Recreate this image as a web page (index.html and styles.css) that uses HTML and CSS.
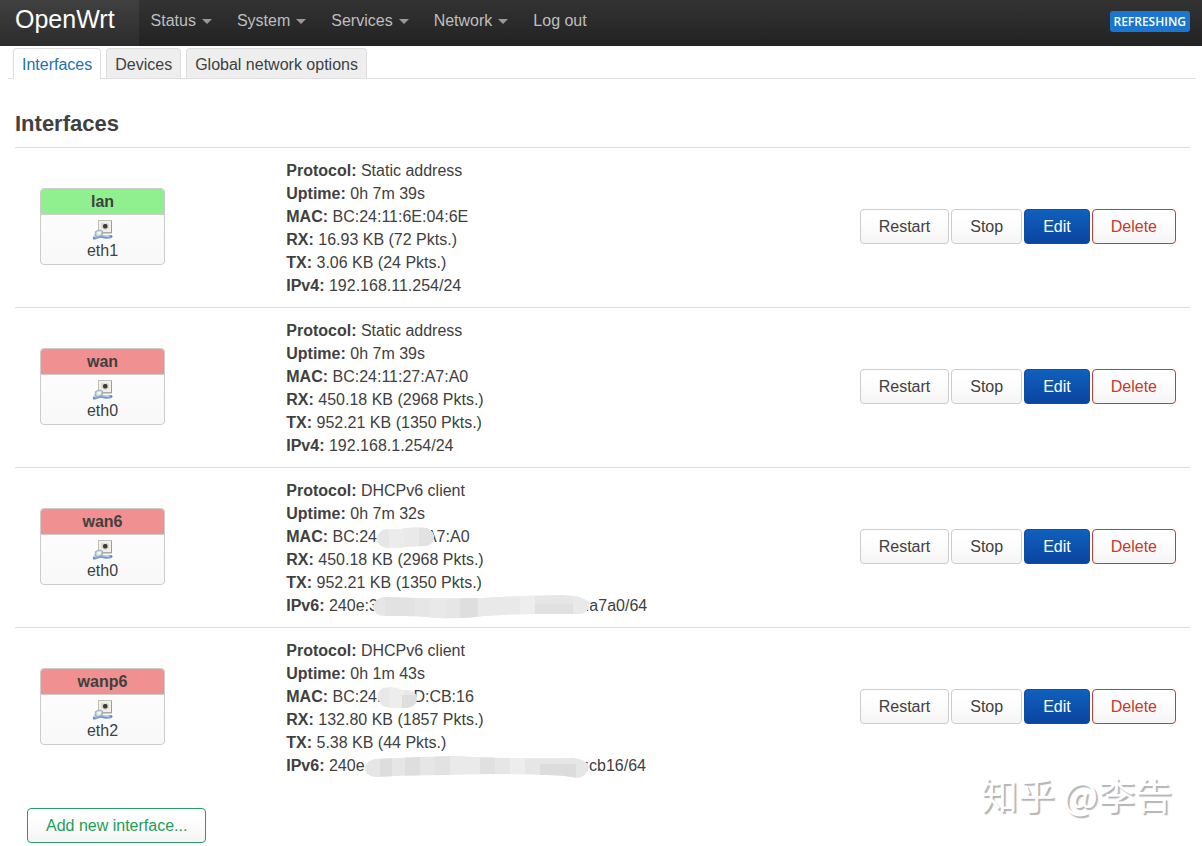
FILE: index.html
```html
<!DOCTYPE html>
<html lang="en">
<head>
<meta charset="utf-8">
<title>OpenWrt - Interfaces</title>
<link rel="stylesheet" href="styles.css">
</head>
<body>
<svg class="defs" aria-hidden="true">
  <defs>
    <symbol id="eth" viewBox="0 0 20 20">
      <rect x="5.500" y="0.500" width="13" height="12" fill="#f1f1ea" stroke="#c0c0b8"/>
      <path d="M18.500 1v12H9" fill="none" stroke="#9c9c96"/>
      <path d="M8 3h8v6h-2v1h-4V9H8z" fill="#dcdcd2"/>
      <rect x="10" y="4" width="4.500" height="4.500" rx="1.800" fill="#3a3a33"/>
      <path d="M1 18c2 .6 4-2 6.500-1.800 3 .2 4 2 10.500.3" fill="none" stroke="#6e93c8" stroke-width="3" stroke-linecap="round"/>
      <path d="M2 17.500c2 0 3.500-2 6-1.800 2.500.2 4.500 1.400 9 .6" fill="none" stroke="#a9c4ea" stroke-width="1.200"/>
      <path d="M2.500 11.500l4-1.500 3 1-.5 4-4 2-3-1.500z" fill="#cbd4da" stroke="#8a99a6" stroke-width=".8"/>
      <path d="M4 12.500l3-1.200 1 .7-.3 2L5 15z" fill="#f4f7f8"/>
    </symbol>
  </defs>
</svg>

<header class="topbar">
  <a class="brand" href="#">OpenWrt</a>
  <nav class="menu">
    <a class="has-menu" href="#">Status</a>
    <a class="has-menu" href="#">System</a>
    <a class="has-menu" href="#">Services</a>
    <a class="has-menu" href="#">Network</a>
    <a href="#">Log out</a>
  </nav>
  <button class="poll" type="button">REFRESHING</button>
</header>

<nav class="tabs">
  <a class="tab active" href="#">Interfaces</a>
  <a class="tab" href="#">Devices</a>
  <a class="tab" href="#">Global network options</a>
</nav>

<main class="content">
  <h3 class="title">Interfaces</h3>
  <table class="ifaces">
    <tbody>
      <tr>
        <td class="col-name"><div class="ifacebox"><div class="zone up">lan</div><div class="device"><svg class="icon"><use href="#eth"/></svg>eth1</div></div></td>
        <td class="col-info">
          <div><b>Protocol:</b> Static address</div>
          <div><b>Uptime:</b> 0h 7m 39s</div>
          <div><b>MAC:</b> BC:24:11:6E:04:6E</div>
          <div><b>RX:</b> 16.93 KB (72 Pkts.)</div>
          <div><b>TX:</b> 3.06 KB (24 Pkts.)</div>
          <div><b>IPv4:</b> 192.168.11.254/24</div>
        </td>
        <td class="col-actions"><div class="actions"><button class="btn" type="button">Restart</button><button class="btn" type="button">Stop</button><button class="btn primary" type="button">Edit</button><button class="btn danger" type="button">Delete</button></div></td>
      </tr>
      <tr>
        <td class="col-name"><div class="ifacebox"><div class="zone wan">wan</div><div class="device"><svg class="icon"><use href="#eth"/></svg>eth0</div></div></td>
        <td class="col-info">
          <div><b>Protocol:</b> Static address</div>
          <div><b>Uptime:</b> 0h 7m 39s</div>
          <div><b>MAC:</b> BC:24:11:27:A7:A0</div>
          <div><b>RX:</b> 450.18 KB (2968 Pkts.)</div>
          <div><b>TX:</b> 952.21 KB (1350 Pkts.)</div>
          <div><b>IPv4:</b> 192.168.1.254/24</div>
        </td>
        <td class="col-actions"><div class="actions"><button class="btn" type="button">Restart</button><button class="btn" type="button">Stop</button><button class="btn primary" type="button">Edit</button><button class="btn danger" type="button">Delete</button></div></td>
      </tr>
      <tr>
        <td class="col-name"><div class="ifacebox"><div class="zone wan">wan6</div><div class="device"><svg class="icon"><use href="#eth"/></svg>eth0</div></div></td>
        <td class="col-info">
          <div><b>Protocol:</b> DHCPv6 client</div>
          <div><b>Uptime:</b> 0h 7m 32s</div>
          <div><b>MAC:</b> BC:24<svg class="mask mask-mac" viewBox="0 0 57 22"><clipPath id="m1"><path d="M9 2Q20 3 30 1Q42 0 50 1Q57 4 57 11Q56 18 48 19Q30 19 22 21H10Q0 20 0 11Q1 4 9 2z"/></clipPath><g clip-path="url(#m1)"><rect width="57" height="22" fill="#e6e6e6"/><rect x="12" width="15" height="22" fill="#ececec"/><rect x="27" width="15" height="22" fill="#e9e9e9"/><rect x="42" width="15" height="22" fill="#e2e2e2"/></g></svg>A7:A0</div>
          <div><b>RX:</b> 450.18 KB (2968 Pkts.)</div>
          <div><b>TX:</b> 952.21 KB (1350 Pkts.)</div>
          <div><b>IPv6:</b> 240e:3<svg class="mask mask-ip" viewBox="0 0 216 24"><clipPath id="m2"><path d="M10 2Q60 4 110 3Q160 0 190 0Q206 1 208 3Q216 5 216 11Q215 18 206 19Q150 18 110 21Q90 24 65 23Q30 20 12 21Q1 21 0 12Q1 4 10 2z"/></clipPath><g clip-path="url(#m2)"><rect width="216" height="24" fill="#e6e6e6"/><rect x="12" width="30" height="24" fill="#e2e2e2"/><rect x="57" width="15" height="24" fill="#e9e9e9"/><rect x="87" width="18" height="24" fill="#dedede"/><rect x="105" width="42" height="24" fill="#e9e9e9"/><rect x="147" width="15" height="24" fill="#eeeeee"/><rect x="162" y="9" width="38" height="15" fill="#e0e0e0"/><rect x="200" width="16" height="24" fill="#e9e9e9"/></g></svg>:a7a0/64</div>
        </td>
        <td class="col-actions"><div class="actions"><button class="btn" type="button">Restart</button><button class="btn" type="button">Stop</button><button class="btn primary" type="button">Edit</button><button class="btn danger" type="button">Delete</button></div></td>
      </tr>
      <tr>
        <td class="col-name"><div class="ifacebox"><div class="zone wan">wanp6</div><div class="device"><svg class="icon"><use href="#eth"/></svg>eth2</div></div></td>
        <td class="col-info">
          <div><b>Protocol:</b> DHCPv6 client</div>
          <div><b>Uptime:</b> 0h 1m 43s</div>
          <div><b>MAC:</b> BC:24:<svg class="mask mask-mac-short" viewBox="0 0 40 22"><clipPath id="m3"><path d="M6 1Q16-1 26 3Q39 2 40 11Q40 20 28 21H14Q4 20 2 14Q-2 5 6 1z"/></clipPath><g clip-path="url(#m3)"><rect width="40" height="22" fill="#e8e8e8"/><rect x="12" width="15" height="22" fill="#ededed"/><rect x="25" y="8" width="15" height="14" fill="#dedede"/></g></svg>D:CB:16</div>
          <div><b>RX:</b> 132.80 KB (1857 Pkts.)</div>
          <div><b>TX:</b> 5.38 KB (44 Pkts.)</div>
          <div><b>IPv6:</b> 240e<svg class="mask mask-ip-long" viewBox="0 0 224 24"><clipPath id="m4"><path d="M10 4Q50 2 90 1Q130 4 208 3Q222 4 224 12Q222 22 212 23Q200 20 180 20Q120 18 80 20Q40 20 10 22Q0 21 0 13Q1 6 10 4z"/></clipPath><g clip-path="url(#m4)"><rect width="224" height="24" fill="#e6e6e6"/><rect x="15" width="12" height="24" fill="#dddddd"/><rect x="40" width="15" height="24" fill="#dedede"/><rect x="70" width="15" height="24" fill="#e2e2e2"/><rect x="85" width="30" height="24" fill="#eaeaea"/><rect x="115" width="15" height="24" fill="#e0e0e0"/><rect x="145" width="15" height="24" fill="#ededed"/><rect x="175" y="9" width="36" height="15" fill="#dcdcdc"/></g></svg>:cb16/64</div>
        </td>
        <td class="col-actions"><div class="actions"><button class="btn" type="button">Restart</button><button class="btn" type="button">Stop</button><button class="btn primary" type="button">Edit</button><button class="btn danger" type="button">Delete</button></div></td>
      </tr>
    </tbody>
  </table>
  <button class="btn add" type="button">Add new interface...</button>
  <div class="watermark" lang="zh">知乎 @李告</div>
</main>
</body>
</html>
```
FILE: styles.css
```css
* { box-sizing: border-box; }

body {
  margin: 0;
  background: #fff;
  color: #404040;
  font: 16px/23px "Liberation Sans", Arial, sans-serif;
}

a { text-decoration: none; }

.defs { display: block; width: 0; height: 0; }

.topbar {
  display: flex;
  align-items: stretch;
  height: 46px;
  background: linear-gradient(#333, #222);
}

.brand {
  padding: 4px 24px 12px 15px;
  background: linear-gradient(#404040, #2c2c2c);
  color: #fff;
  font-size: 25px;
  line-height: 30px;
}

.menu {
  display: flex;
  gap: 25px;
  flex: 1;
  padding: 9px 12px;
}

.menu a { color: #bfbfbf; }

.has-menu::after {
  content: "";
  display: inline-block;
  margin-left: 6px;
  border: 5px solid transparent;
  border-top-color: #999;
  border-bottom: 0;
  vertical-align: 2px;
}

.poll {
  align-self: flex-start;
  margin: 11px 12px 0 0;
  padding: 0 4px;
  border: 0;
  border-radius: 3px;
  background: #1b76d0;
  color: #fff;
  font: 600 12px/21px "Open Sans", sans-serif;
}

.tabs {
  display: flex;
  gap: 5px;
  margin: 2px 6px 0 8px;
  padding-left: 5px;
  border-bottom: 1px solid #ddd;
}

.tab {
  padding: 4px 8px 2px;
  border: 1px solid #ddd;
  border-bottom: 0;
  border-radius: 4px 4px 0 0;
  background: #eee;
  color: #404040;
}

.tab.active {
  margin-bottom: -1px;
  background: #fff;
  color: #1f6fae;
}

.content {
  position: relative;
  padding: 30px 12px 3px 15px;
}

.title {
  margin: 0;
  padding-bottom: 8px;
  border-bottom: 1px solid #ddd;
  font-size: 22px;
  line-height: 30px;
}

.ifaces {
  width: 100%;
  border-collapse: collapse;
}

.ifaces tr + tr { border-top: 1px solid #ddd; }

.ifaces td { padding: 10px 0 12px; vertical-align: middle; }

.ifaces .col-name { width: 23%; padding-left: 25px; }

.ifaces .col-info { padding: 11px 0 10px 1px; }

.ifaces .col-actions { padding-right: 14px; }

.ifacebox {
  width: 125px;
  overflow: hidden;
  border: 1px solid #ccc;
  border-radius: 4px;
  background: linear-gradient(#fff, #f8f8f8);
  text-align: center;
}

.zone {
  padding: 1px 0;
  border-bottom: 1px solid #ccc;
  font-weight: bold;
}

.up { background: #90f090; }
.wan { background: #f09090; }

.device {
  display: flex;
  flex-direction: column;
  align-items: center;
  padding: 5px 0 2px;
  line-height: 22px;
}

.icon { width: 20px; height: 20px; }

.mask {
  position: relative;
  height: 22px;
  margin-top: -4px;
  margin-bottom: -4px;
  vertical-align: middle;
}

.mask-mac { width: 57px; margin-right: -8px; }
.mask-mac-short { width: 40px; margin-left: -4px; margin-right: -4px; }
.mask-ip { width: 216px; height: 24px; margin-left: -5px; margin-right: -4px; }
.mask-ip-long { width: 224px; height: 24px; margin-right: -4px; }

.actions {
  display: flex;
  justify-content: flex-end;
  gap: 2px;
}

.btn {
  padding: 5px 18px;
  border: 1px solid #ccc;
  border-radius: 4px;
  background: linear-gradient(#fff 25%, #f5f5f5);
  color: #404040;
  font: inherit;
}

.btn.primary {
  border-color: #0d4fa8;
  background: linear-gradient(#1060bd, #0a45a0);
  color: #fff;
}

.btn.danger { border-color: #c43c35; color: #c9392c; }

.btn.add {
  margin: 21px 12px 0;
  border-color: #2a9a68;
  color: #1e9e58;
}

.watermark {
  position: absolute;
  right: 30px;
  bottom: 28px;
  color: #fff;
  font: 37px/48px "Noto Sans CJK SC", sans-serif;
  text-shadow: 2px 2px 1px #b4b4b4;
}
```
